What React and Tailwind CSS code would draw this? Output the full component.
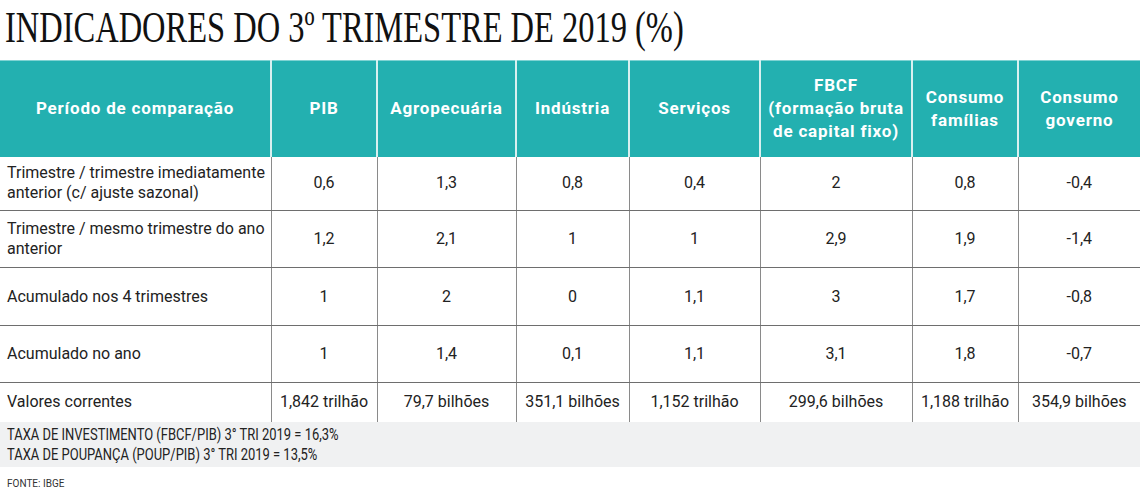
import React from "react";

const cols = [271, 106, 139, 113, 131, 152, 106, 122];
const headers = [
  "Período de comparação",
  "PIB",
  "Agropecuária",
  "Indústria",
  "Serviços",
  <>FBCF<br />(formação bruta<br />de capital fixo)</>,
  <>Consumo<br />famílias</>,
  <>Consumo<br />governo</>,
];
const rows = [
  { h: 54, label: <>Trimestre / trimestre imediatamente<br />anterior (c/ ajuste sazonal)</>, v: ["0,6", "1,3", "0,8", "0,4", "2", "0,8", "-0,4"] },
  { h: 57, label: <>Trimestre / mesmo trimestre do ano<br />anterior</>, v: ["1,2", "2,1", "1", "1", "2,9", "1,9", "-1,4"] },
  { h: 58, label: "Acumulado nos 4 trimestres", v: ["1", "2", "0", "1,1", "3", "1,7", "-0,8"] },
  { h: 57, label: "Acumulado no ano", v: ["1", "1,4", "0,1", "1,1", "3,1", "1,8", "-0,7"] },
  { h: 39, label: "Valores correntes", v: ["1,842 trilhão", "79,7 bilhões", "351,1 bilhões", "1,152 trilhão", "299,6 bilhões", "1,188 trilhão", "354,9 bilhões"], last: true },
];

export default function App() {
  return (
    <div className="w-[1140px] h-[491px] bg-white overflow-hidden text-[#222]" style={{ fontFamily: "Roboto, 'Noto Sans', sans-serif" }}>
      <div className="h-[60px] pl-[5px] pt-[6px] overflow-hidden">
        <span
          className="inline-block origin-left scale-x-[0.738] text-[44px] leading-[44px] whitespace-nowrap text-[#111]"
          style={{ fontFamily: "'Liberation Serif', serif" }}
        >
          INDICADORES DO 3º TRIMESTRE DE 2019 (%)
        </span>
      </div>
      <table className="table-fixed border-collapse w-[1140px]">
        <colgroup>
          {cols.map((w, i) => (
            <col key={i} style={{ width: w }} />
          ))}
        </colgroup>
        <thead>
          <tr className="h-[96px] bg-[#23b0b0]">
            {headers.map((h, i) => (
              <th
                key={i}
                className={`p-0 text-white font-bold text-[17px] leading-[23px] tracking-[0.8px] text-center align-middle border-t border-t-[#7fd3d3] ${i > 0 ? "border-l-2 border-l-[#d9f0f0]" : ""}`}
              >
                {h}
              </th>
            ))}
          </tr>
        </thead>
        <tbody>
          {rows.map((r, ri) => (
            <tr key={ri} style={{ height: r.h }}>
              <td className={`p-0 pl-[7px] text-[16px] leading-[20px] align-middle whitespace-nowrap ${r.last ? "" : "border-b border-b-[#6e6e6e]"}`}>
                {r.label}
              </td>
              {r.v.map((v, i) => (
                <td
                  key={i}
                  className={`p-0 text-center text-[16px] leading-[20px] align-middle whitespace-nowrap border-l border-l-[#8a8a8a] ${r.last ? "" : "border-b border-b-[#6e6e6e]"}`}
                >
                  {v}
                </td>
              ))}
            </tr>
          ))}
        </tbody>
      </table>
      <div className="h-[45px] bg-[#f0f1f2] pl-[7px] pt-[3px] overflow-hidden">
        <div className="origin-left scale-x-[0.81] text-[16px] leading-[20px] whitespace-nowrap">
          <div>TAXA DE INVESTIMENTO (FBCF/PIB) 3° TRI 2019 = 16,3%</div>
          <div>TAXA DE POUPANÇA (POUP/PIB) 3° TRI 2019 = 13,5%</div>
        </div>
      </div>
      <div className="pl-[7px] pt-[11px] text-[10px] leading-[12px] text-[#333]">FONTE: IBGE</div>
    </div>
  );
}
